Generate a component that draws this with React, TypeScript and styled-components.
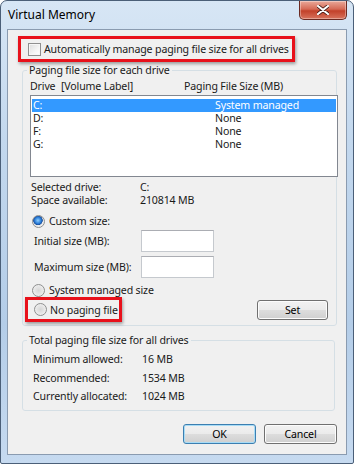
import React from "react";
import styled, { createGlobalStyle } from "styled-components";

const GlobalStyle = createGlobalStyle`
    html, body {
        margin: 0;
        padding: 0;
        background: #ffffff;
    }
    body {
        font-family: "Noto Sans", "Open Sans", sans-serif;
        font-size: 10.6px;
        letter-spacing: -0.15px;
        line-height: 12px;
        color: #1a1a1a;
        white-space: nowrap;
    }
`;

const Window = styled.div`
    width: 354px;
    height: 464px;
    box-sizing: border-box;
    border: 1px solid #4b5f78;
    border-radius: 7px 7px 2px 2px;
    background: linear-gradient(180deg, #d7e6f5 0%, #c3d8ee 30%, #b4cde8 70%, #c6daf0 100%);
    display: flex;
    flex-direction: column;
    overflow: hidden;
`;

const TitleBar = styled.div`
    height: 28px;
    display: flex;
    align-items: flex-start;
    justify-content: space-between;
    padding-left: 7px;
`;

const Title = styled.div`
    margin-top: 8px;
    font-size: 12px;
    letter-spacing: 0;
    color: #000;
`;

const CloseButton = styled.div`
    width: 46px;
    height: 18px;
    margin-right: 6px;
    border: 1px solid #6b2a22;
    border-top: none;
    border-radius: 0 0 5px 5px;
    background: linear-gradient(180deg, #e9a99a 0%, #d56a56 45%, #c2412a 55%, #d8735d 100%);
    display: flex;
    align-items: center;
    justify-content: center;
    box-shadow: inset 0 0 0 1px rgba(255, 255, 255, 0.35);
`;

const Client = styled.div`
    flex: 1;
    margin: 0 6px 8px 6px;
    border: 1px solid #8a9bb0;
    background: #f0f0f0;
    display: flex;
    flex-direction: column;
    padding: 6px 12px 0 9px;
`;

const Highlight = styled.div<{ $w: number; $h: number }>`
    width: ${(p) => p.$w}px;
    height: ${(p) => p.$h}px;
    box-sizing: border-box;
    flex: none;
    border: 3px solid #e8111b;
    box-shadow: 1px 2px 3px rgba(0, 0, 0, 0.35);
    display: flex;
    align-items: center;
    padding-left: 7px;
    gap: 3px;
`;

const CheckBox = styled.div`
    width: 11px;
    height: 11px;
    flex: none;
    border: 1px solid #8f8f8f;
    background: linear-gradient(135deg, #dcdcdc 0%, #f4f4f4 60%, #ffffff 100%);
    box-shadow: inset 0 0 0 1px #f6f6f6;
`;

const Group = styled.fieldset<{ $h: number }>`
    margin: 0 0 0 5px;
    width: 313px;
    height: ${(p) => p.$h}px;
    box-sizing: border-box;
    flex: none;
    border: 1px solid #d5dfe5;
    border-radius: 3px;
    padding: 0 0 0 7px;
    display: flex;
    flex-direction: column;
`;

const Legend = styled.legend`
    padding: 0 2px;
    margin-left: -3px;
    line-height: 13px;
`;

const HeaderRow = styled.div`
    display: flex;
    height: 18px;
    align-items: center;
`;

const HeaderCell = styled.span<{ $w?: number }>`
    width: ${(p) => (p.$w ? `${p.$w}px` : "auto")};
`;

const ListBox = styled.div`
    width: 308px;
    height: 82px;
    box-sizing: border-box;
    margin-right: -2px;
    align-self: flex-end;
    border: 1px solid #828790;
    background: #fff;
    padding: 3px 1px;
`;

const ListRow = styled.div<{ $selected?: boolean }>`
    display: flex;
    height: 13px;
    line-height: 13px;
    background: ${(p) => (p.$selected ? "#3399ff" : "transparent")};
    color: ${(p) => (p.$selected ? "#ffffff" : "#1a1a1a")};
    padding-left: 1px;
`;

const DriveCell = styled.span`
    width: 182px;
`;

const InfoRow = styled.div<{ $h?: number; $pad?: number }>`
    display: flex;
    align-items: center;
    height: ${(p) => p.$h ?? 13}px;
    padding-left: ${(p) => p.$pad ?? 1}px;
`;

const InfoLabel = styled.span<{ $w: number }>`
    width: ${(p) => p.$w}px;
`;

const RadioRow = styled.label`
    display: flex;
    align-items: center;
    gap: 4px;
    padding-left: 2px;
    height: 18px;
`;

const Radio = styled.span<{ $checked?: boolean }>`
    width: 11px;
    height: 11px;
    flex: none;
    border-radius: 50%;
    border: 1px solid #8e8f8f;
    background: ${(p) =>
        p.$checked
            ? "radial-gradient(circle at 45% 40%, #8fd0ff 0%, #2b7dd8 35%, #1a4f9c 50%, #e8e8e8 56%, #f8f8f8 100%)"
            : "radial-gradient(circle at 50% 50%, #d6d6d6 0%, #e6e6e6 50%, #f8f8f8 100%)"};
    box-sizing: content-box;
`;

const FieldRow = styled.div`
    display: flex;
    align-items: center;
    height: 22px;
    padding-left: 4px;
    margin-bottom: 4px;
`;

const TextBox = styled.div`
    width: 73px;
    height: 22px;
    box-sizing: border-box;
    border: 1px solid #c5c9ce;
    border-top-color: #abadb3;
    background: #fff;
`;

const BottomRow = styled.div`
    display: flex;
    align-items: center;
    justify-content: space-between;
    padding-right: 8px;
    margin-top: -2px;
`;

const Button = styled.div<{ $w: number; $default?: boolean }>`
    width: ${(p) => p.$w}px;
    height: 20px;
    box-sizing: border-box;
    border: 1px solid ${(p) => (p.$default ? "#3c7fb1" : "#707070")};
    border-radius: 3px;
    background: linear-gradient(180deg, #f2f2f2 0%, #ebebeb 48%, #dddddd 52%, #cfcfcf 100%);
    box-shadow: inset 0 0 0 1px ${(p) => (p.$default ? "#a8dcf6" : "#fcfcfc")};
    display: flex;
    align-items: center;
    justify-content: center;
    color: #000;
`;

const Footer = styled.div`
    display: flex;
    justify-content: flex-end;
    gap: 8px;
    margin-top: 13px;
    margin-right: -3px;
`;

const App = () => {
    return (
        <>
            <GlobalStyle />
            <Window>
                <TitleBar>
                    <Title>Virtual Memory</Title>
                    <CloseButton>
                        <svg width="12" height="10" viewBox="0 0 12 10">
                            <path
                                d="M1 1 L11 9 M11 1 L1 9"
                                stroke="#3a1510"
                                strokeWidth="3.6"
                                strokeLinecap="round"
                            />
                            <path
                                d="M1 1 L11 9 M11 1 L1 9"
                                stroke="#ffffff"
                                strokeWidth="2.2"
                                strokeLinecap="round"
                            />
                        </svg>
                    </CloseButton>
                </TitleBar>
                <Client>
                    <Highlight $w={277} $h={26} style={{ marginLeft: 1 }}>
                        <CheckBox />
                        <span>Automatically manage paging file size for all drives</span>
                    </Highlight>

                    <Group $h={262} style={{ marginTop: 2 }}>
                        <Legend>Paging file size for each drive</Legend>
                        <HeaderRow>
                            <HeaderCell $w={31}>Drive</HeaderCell>
                            <HeaderCell $w={123}>[Volume Label]</HeaderCell>
                            <HeaderCell>Paging File Size (MB)</HeaderCell>
                        </HeaderRow>
                        <ListBox>
                            <ListRow $selected>
                                <DriveCell>C:</DriveCell>
                                <span>System managed</span>
                            </ListRow>
                            <ListRow>
                                <DriveCell>D:</DriveCell>
                                <span>None</span>
                            </ListRow>
                            <ListRow>
                                <DriveCell>F:</DriveCell>
                                <span>None</span>
                            </ListRow>
                            <ListRow>
                                <DriveCell>G:</DriveCell>
                                <span>None</span>
                            </ListRow>
                        </ListBox>

                        <InfoRow style={{ marginTop: 3 }}>
                            <InfoLabel $w={109}>Selected drive:</InfoLabel>
                            <span>C:</span>
                        </InfoRow>
                        <InfoRow>
                            <InfoLabel $w={109}>Space available:</InfoLabel>
                            <span>210814 MB</span>
                        </InfoRow>

                        <RadioRow style={{ marginTop: 6 }}>
                            <Radio $checked />
                            <span>Custom size:</span>
                        </RadioRow>
                        <FieldRow>
                            <InfoLabel $w={107}>Initial size (MB):</InfoLabel>
                            <TextBox />
                        </FieldRow>
                        <FieldRow>
                            <InfoLabel $w={107}>Maximum size (MB):</InfoLabel>
                            <TextBox />
                        </FieldRow>

                        <RadioRow style={{ marginTop: -1 }}>
                            <Radio />
                            <span>System managed size</span>
                        </RadioRow>
                        <BottomRow>
                            <Highlight $w={97} $h={25} style={{ marginLeft: -5, paddingLeft: 6 }}>
                                <Radio />
                                <span>No paging file</span>
                            </Highlight>
                            <Button $w={71}>Set</Button>
                        </BottomRow>
                    </Group>

                    <Group $h={77} style={{ marginTop: 8 }}>
                        <Legend>Total paging file size for all drives</Legend>
                        <InfoRow $h={18} $pad={3} style={{ marginTop: 3 }}>
                            <InfoLabel $w={109}>Minimum allowed:</InfoLabel>
                            <span>16 MB</span>
                        </InfoRow>
                        <InfoRow $h={19} $pad={3}>
                            <InfoLabel $w={109}>Recommended:</InfoLabel>
                            <span>1534 MB</span>
                        </InfoRow>
                        <InfoRow $h={18} $pad={3}>
                            <InfoLabel $w={109}>Currently allocated:</InfoLabel>
                            <span>1024 MB</span>
                        </InfoRow>
                    </Group>

                    <Footer>
                        <Button $w={73} $default>
                            OK
                        </Button>
                        <Button $w={73}>Cancel</Button>
                    </Footer>
                </Client>
            </Window>
        </>
    );
};

export default App;
